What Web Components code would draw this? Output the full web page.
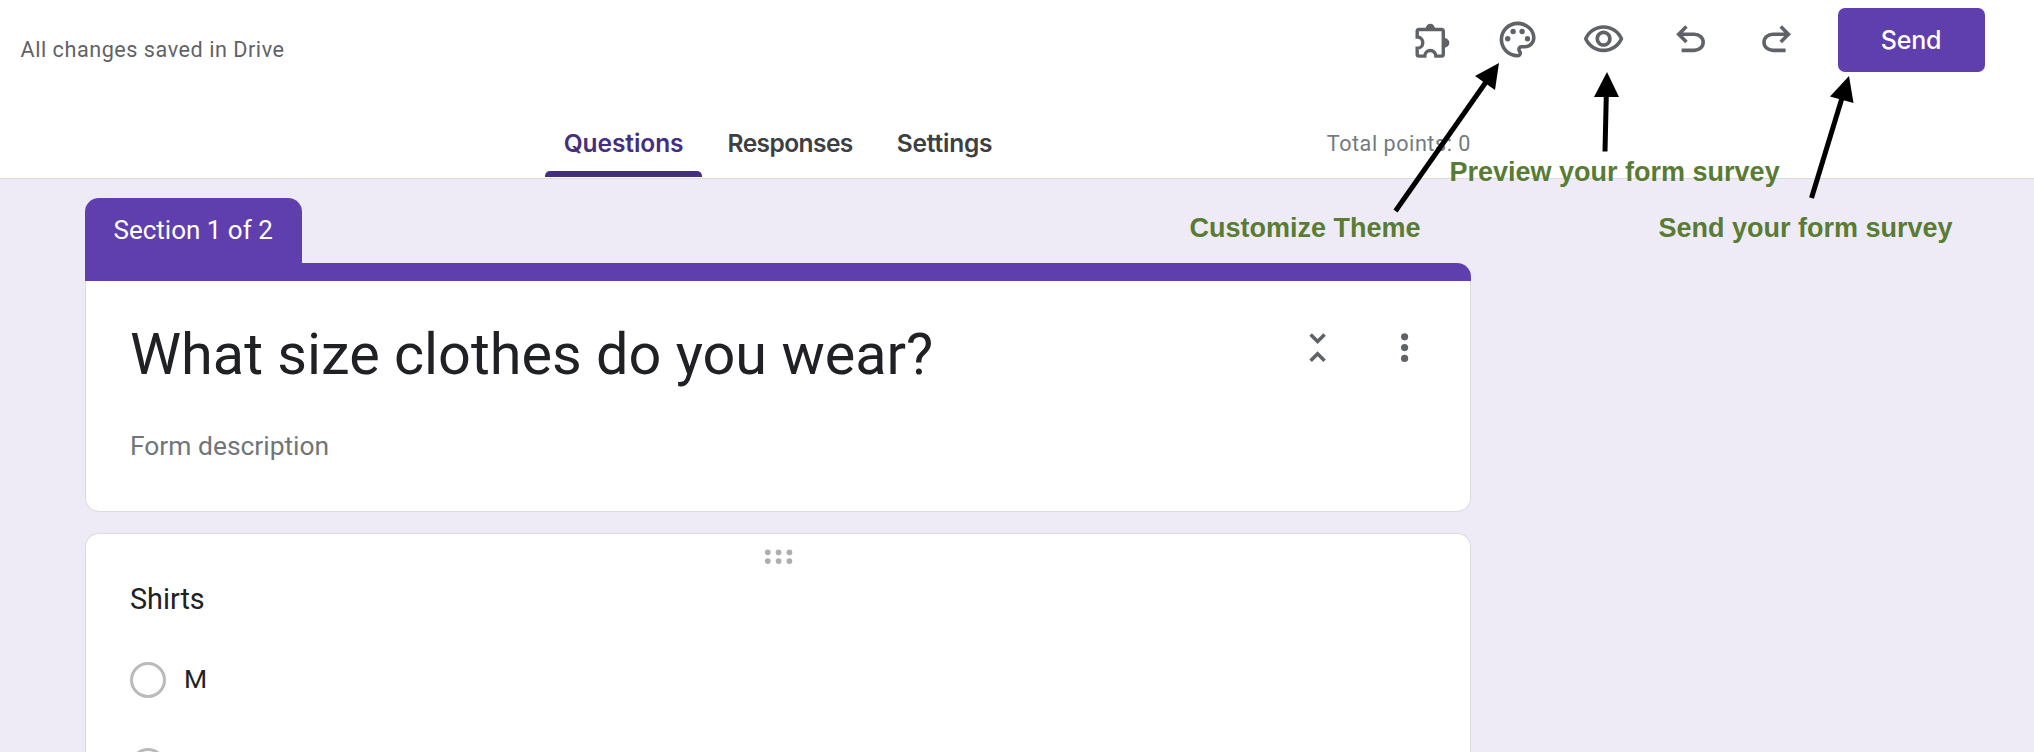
<!DOCTYPE html>
<html lang="en">
<head>
<meta charset="utf-8">
<title>What size clothes do you wear?</title>
<style>
    body {
        margin: 0;
        height: 752px;
        overflow: hidden;
        background: #efebf6;
        font-family: Roboto, sans-serif;
        color: #202124;
        --purple: #5f3fae;
        --purple-dark: #442e80;
        --grey: #5f6368;
        --line: #dadce0;
    }
</style>
</head>
<body>
<form-editor>
    <form-header slot="header">
        <span slot="status">All changes saved in Drive</span>
        <form-icon slot="tools" name="addons"></form-icon>
        <form-icon slot="tools" name="palette"></form-icon>
        <form-icon slot="tools" name="preview"></form-icon>
        <form-icon slot="tools" name="undo"></form-icon>
        <form-icon slot="tools" name="redo"></form-icon>
        <send-button slot="send">Send</send-button>
        <form-tab slot="tabs" style="letter-spacing:-.05px" active>Questions</form-tab>
        <form-tab slot="tabs" style="letter-spacing:-.55px">Responses</form-tab>
        <form-tab slot="tabs" style="letter-spacing:-.2px">Settings</form-tab>
        <span slot="points">Total points: 0</span>
    </form-header>
    <section-card>
        <span slot="section">Section 1 of 2</span>
        <span slot="title">What size clothes do you wear?</span>
        <span slot="description">Form description</span>
    </section-card>
    <question-card>
        <span slot="title">Shirts</span>
        <radio-option>M</radio-option>
        <radio-option></radio-option>
    </question-card>
</form-editor>
<arrow-layer></arrow-layer>
<note-label style="left:1189.5px;top:212px">Customize Theme</note-label>
<note-label style="left:1449.5px;top:156px">Preview your form survey</note-label>
<note-label style="left:1658.5px;top:212px">Send your form survey</note-label>

<script>
const define = (name, html) => {
    const template = document.createElement('template');
    template.innerHTML = html;

    window.customElements.define(name, class extends HTMLElement {
        constructor() {
            super();
            this.attachShadow({mode: 'open'});
            this.shadowRoot.appendChild(template.content.cloneNode(true));
        }
    });
};

const icons = {
    addons: `
        <g transform="translate(0 .4)">
            <path fill="none" stroke="currentColor" stroke-width="1.9" d="M5 6h12.5q1 0 1 1v12.8q0 1-1 1h-3.1a3.1 3.1 0 0 0-6.2 0H5q-1 0-1-1v-3.4a3.1 3.1 0 0 0 0-6.2V7q0-1 1-1z"/>
            <path d="M8.7 5.6a2.6 2.8 0 0 1 5.2 0zM19 10.7a2.9 2.7 0 0 1 0 5.4z"/>
        </g>`,
    palette: `
        <path d="M12 22C6.49 22 2 17.51 2 12S6.49 2 12 2s10 4.04 10 9c0 3.31-2.69 6-6 6h-1.77c-.28 0-.5.22-.5.5 0 .12.05.23.13.33.41.47.64 1.06.64 1.67 0 1.38-1.12 2.5-2.5 2.5zm0-18c-4.41 0-8 3.59-8 8s3.59 8 8 8c.28 0 .5-.22.5-.5 0-.16-.08-.28-.14-.35-.41-.46-.63-1.05-.63-1.65 0-1.38 1.12-2.5 2.5-2.5H16c2.21 0 4-1.79 4-4 0-3.86-3.59-7-8-7z"/>
        <circle cx="6.5" cy="11.5" r="1.5"/><circle cx="9.5" cy="7.5" r="1.5"/>
        <circle cx="14.5" cy="7.5" r="1.5"/><circle cx="17.5" cy="11.5" r="1.5"/>`,
    preview: `<path d="M12 6c3.79 0 7.17 2.13 8.82 5.5C19.17 14.87 15.79 17 12 17s-7.17-2.13-8.82-5.5C4.83 8.13 8.21 6 12 6m0-2C7 4 2.73 7.11 1 11.5 2.73 15.89 7 19 12 19s9.27-3.11 11-7.5C21.27 7.11 17 4 12 4zm0 5c1.38 0 2.5 1.12 2.5 2.5S13.38 14 12 14s-2.5-1.12-2.5-2.5S10.62 9 12 9m0-2c-2.48 0-4.5 2.02-4.5 4.5S9.52 16 12 16s4.5-2.02 4.5-4.5S14.48 7 12 7z"/>`,
    undo: `<path d="M7 19v-2h7.1q1.575 0 2.74-1T18 13.5q0-1.5-1.16-2.5T14.1 10H7.8l2.6 2.6L9 14 4 9l5-5 1.4 1.4L7.8 8h6.3q2.425 0 4.16 1.575T20 13.5q0 2.35-1.74 3.925T14.1 19z"/>`,
    redo: `<path transform="matrix(-1 0 0 1 24 0)" d="M7 19v-2h7.1q1.575 0 2.74-1T18 13.5q0-1.5-1.16-2.5T14.1 10H7.8l2.6 2.6L9 14 4 9l5-5 1.4 1.4L7.8 8h6.3q2.425 0 4.16 1.575T20 13.5q0 2.35-1.74 3.925T14.1 19z"/>`,
    collapse: `<path d="M7.41 18.59L8.83 20 12 16.83 15.17 20l1.41-1.41L12 14l-4.59 4.59zm9.18-13.18L15.17 4 12 7.17 8.83 4 7.41 5.41 12 10l4.59-4.59z"/>`,
    more: `<circle cx="12" cy="6" r="2"/><circle cx="12" cy="12" r="2"/><circle cx="12" cy="18" r="2"/>`,
    drag: `
        <circle cx="6" cy="9.6" r="1.6"/><circle cx="12" cy="9.6" r="1.6"/><circle cx="18" cy="9.6" r="1.6"/>
        <circle cx="6" cy="14.5" r="1.6"/><circle cx="12" cy="14.5" r="1.6"/><circle cx="18" cy="14.5" r="1.6"/>`
};

define('form-icon', `
    <style>
        :host {
            display: block;
            width: 43.2px;
            height: 43.2px;
            color: var(--icon, var(--grey));
        }
        svg {
            display: block;
            width: 100%;
            height: 100%;
            fill: currentColor;
        }
    </style>
    <svg viewBox="0 0 24 24"></svg>
`);

define('send-button', `
    <style>
        :host {
            display: flex;
            align-items: center;
            justify-content: center;
            box-sizing: border-box;
            width: 147px;
            height: 64px;
            padding: 0 1px 1px 0;
            border-radius: 7px;
            background: var(--purple);
            color: #fff;
            font: 500 25px/40px Inter, sans-serif;
            letter-spacing: -.2px;
        }
    </style>
    <slot></slot>
`);

define('form-tab', `
    <style>
        :host {
            display: block;
            position: relative;
            padding: 0 18.5px;
            font: 600 24.5px/70px Inter, sans-serif;
            color: #3c4043;
        }
        :host([active]) {
            color: var(--purple-dark);
        }
        :host([active])::after {
            content: '';
            position: absolute;
            left: 0;
            right: 0;
            bottom: 1px;
            height: 6px;
            border-radius: 5px 5px 0 0;
            background: var(--purple-dark);
        }
    </style>
    <slot></slot>
`);

define('form-header', `
    <style>
        :host {
            display: block;
            height: 178px;
            background: #fff;
            border-bottom: 1px solid var(--line);
        }
        .bar {
            display: flex;
            align-items: center;
            justify-content: space-between;
            height: 80px;
            padding: 0 49px 0 20.5px;
        }
        .status {
            padding-top: 19px;
            font-size: 21.6px;
            letter-spacing: .54px;
            color: var(--grey);
        }
        .actions, .tools, .tabs {
            display: flex;
            align-items: center;
        }
        .actions {
            gap: 40px;
        }
        .tools {
            gap: 43px;
        }
        .nav {
            display: grid;
            grid-template-columns: 1fr auto 1fr;
            align-items: end;
            width: 1386px;
            height: 98px;
            margin-left: 85px;
        }
        .tabs {
            grid-column: 2;
            gap: 7px;
        }
        .points {
            justify-self: end;
            padding-top: 2px;
            font-size: 21.6px;
            line-height: 68px;
            letter-spacing: .54px;
            color: #747a80;
        }
    </style>
    <div class="bar">
        <div class="status"><slot name="status"></slot></div>
        <div class="actions">
            <div class="tools"><slot name="tools"></slot></div>
            <slot name="send"></slot>
        </div>
    </div>
    <div class="nav">
        <div class="tabs"><slot name="tabs"></slot></div>
        <div class="points"><slot name="points"></slot></div>
    </div>
`);

define('section-card', `
    <style>
        :host {
            display: block;
        }
        .section {
            width: fit-content;
            box-sizing: border-box;
            min-width: 217px;
            height: 65px;
            padding: 0 28px 0 28.5px;
            border-radius: 14px 14px 0 0;
            background: var(--purple);
            color: #fff;
            font-size: 26px;
            line-height: 64px;
        }
        .strip {
            height: 18px;
            border-radius: 0 14px 0 0;
            background: var(--purple);
        }
        .card {
            display: flex;
            justify-content: space-between;
            box-sizing: border-box;
            height: 231px;
            padding: 33px 43.5px 0 44px;
            background: #fff;
            border: 1px solid var(--line);
            border-top: 0;
            border-radius: 0 0 14px 14px;
        }
        .title {
            padding-top: 1px;
            font-size: 57.6px;
            line-height: 80px;
        }
        .description {
            margin-top: 13px;
            font-size: 26.4px;
            line-height: 76px;
            color: #70757a;
        }
        .actions {
            display: flex;
            gap: 44px;
            padding-top: 12px;
        }
    </style>
    <div class="section"><slot name="section"></slot></div>
    <div class="strip"></div>
    <div class="card">
        <div>
            <div class="title"><slot name="title"></slot></div>
            <div class="description"><slot name="description"></slot></div>
        </div>
        <div class="actions">
            <form-icon name="collapse"></form-icon>
            <form-icon name="more"></form-icon>
        </div>
    </div>
`);

define('radio-option', `
    <style>
        :host {
            display: flex;
            gap: 18px;
            height: 36px;
            font-size: 26.5px;
            line-height: 34px;
        }
        i {
            box-sizing: border-box;
            width: 36px;
            height: 36px;
            border: 3px solid #bababa;
            border-radius: 50%;
        }
    </style>
    <i></i>
    <slot></slot>
`);

define('question-card', `
    <style>
        :host {
            display: block;
            box-sizing: border-box;
            height: 219px;
            padding: 1px 44px 0;
            overflow: hidden;
            background: #fff;
            border: 1px solid var(--line);
            border-bottom: 0;
            border-radius: 14px 14px 0 0;
        }
        form-icon {
            --icon: #aeaeae;
            margin: 0 auto;
            padding-left: 1.5px;
        }
        .title {
            padding-top: 1px;
            font-size: 28.8px;
            line-height: 40px;
        }
        .options {
            display: grid;
            gap: 50px;
            margin-top: 43px;
        }
    </style>
    <form-icon name="drag"></form-icon>
    <div class="title"><slot name="title"></slot></div>
    <div class="options"><slot></slot></div>
`);

define('form-editor', `
    <style>
        :host {
            display: block;
        }
        main {
            display: grid;
            gap: 21px;
            width: 1386px;
            padding: 19px 0 0 85px;
        }
    </style>
    <slot name="header"></slot>
    <main><slot></slot></main>
`);

// callouts drawn over the editor
define('note-label', `
    <style>
        :host {
            position: absolute;
            font: bold 27px/32px "Liberation Sans", Arial, sans-serif;
            color: #587c33;
            white-space: nowrap;
        }
    </style>
    <slot></slot>
`);

define('arrow-layer', `
    <style>
        :host {
            position: absolute;
            left: 0;
            top: 0;
            pointer-events: none;
        }
        svg {
            display: block;
        }
    </style>
    <svg width="2034" height="752">
        <g stroke="#000" stroke-width="5">
            <path d="M1395.5 211L1486 82"/>
            <path d="M1605 151.5L1606.3 95"/>
            <path d="M1811.5 198L1842 98"/>
        </g>
        <path d="M1499 63l-24 13 20 14z"/>
        <path d="M1607 72l-13 25h25z"/>
        <path d="M1849 76l-19 20.5 23.5 6.5z"/>
    </svg>
`);

const drawIcons = root => {
    root.querySelectorAll('*').forEach(el => {
        if (el.localName === 'form-icon') {
            el.shadowRoot.querySelector('svg').innerHTML = icons[el.getAttribute('name')];
        } else if (el.shadowRoot) {
            drawIcons(el.shadowRoot);
        }
    });
};
drawIcons(document);
</script>
</body>
</html>
